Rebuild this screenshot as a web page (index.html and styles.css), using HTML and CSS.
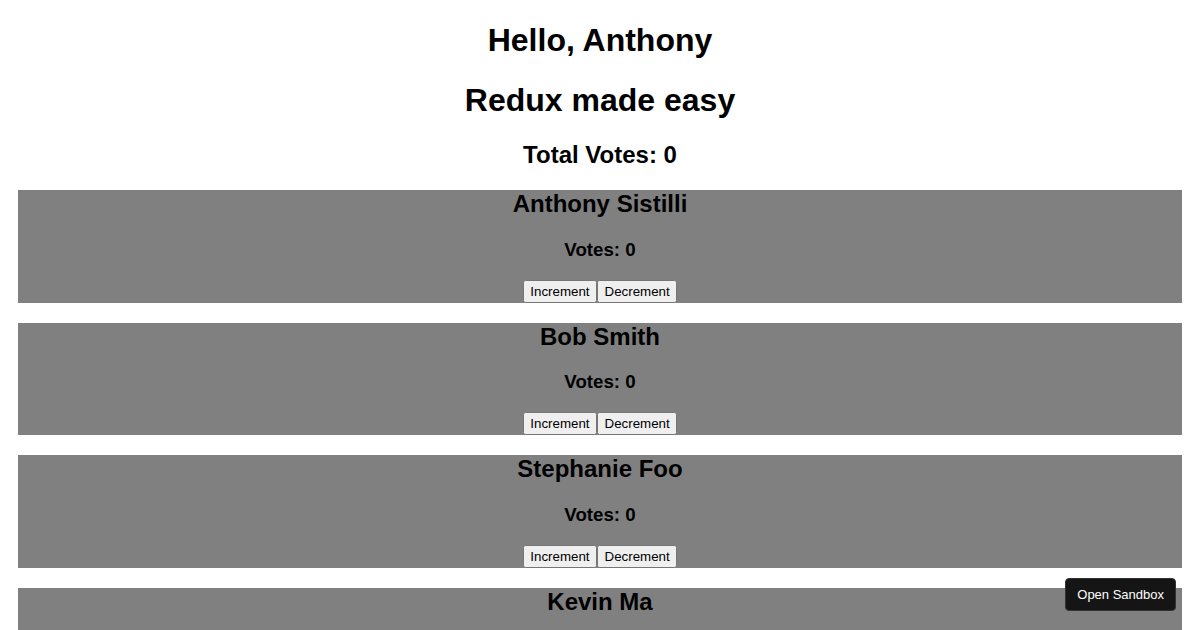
FILE: index.html
```html
<!DOCTYPE html>
<html>
<head>
<meta charset="utf-8">
<link rel="stylesheet" href="styles.css">
</head>
<body>
<div class="app">
  <h1>Hello, Anthony</h1>
  <h1>Redux made easy</h1>
  <h2>Total Votes: 0</h2>
  <div class="card">
    <h2>Anthony Sistilli</h2>
    <h3>Votes: 0</h3>
    <div class="actions"><button>Increment</button><button>Decrement</button></div>
  </div>
  <div class="card">
    <h2>Bob Smith</h2>
    <h3>Votes: 0</h3>
    <div class="actions"><button>Increment</button><button>Decrement</button></div>
  </div>
  <div class="card">
    <h2>Stephanie Foo</h2>
    <h3>Votes: 0</h3>
    <div class="actions"><button>Increment</button><button>Decrement</button></div>
  </div>
  <div class="card">
    <h2>Kevin Ma</h2>
    <h3>Votes: 0</h3>
    <div class="actions"><button>Increment</button><button>Decrement</button></div>
  </div>
</div>
<a class="sandbox">Open Sandbox</a>
</body>
</html>
```

FILE: styles.css
```css
html {
  overflow: hidden;
}
body {
  margin: 0 8px 8px;
  font-family: "Liberation Sans", Arial, sans-serif;
  line-height: 1.2;
  color: #000;
  background: #fff;
}
.app {
  padding: 0 10px;
  text-align: center;
}
.card {
  background: #808080;
}
.actions {
  line-height: 1.15;
}
.actions button {
  font-family: "Liberation Sans", Arial, sans-serif;
  font-size: 13.33px;
  line-height: 16px;
  padding: 2px 5.5px 1px;
}
.sandbox {
  position: fixed;
  right: 24px;
  bottom: 19px;
  background: #151515;
  color: #fff;
  font-family: "Liberation Sans", Arial, sans-serif;
  font-size: 13px;
  line-height: 15px;
  padding: 8px 11px;
  border-radius: 4px;
  border: 1px solid #333;
}
```
